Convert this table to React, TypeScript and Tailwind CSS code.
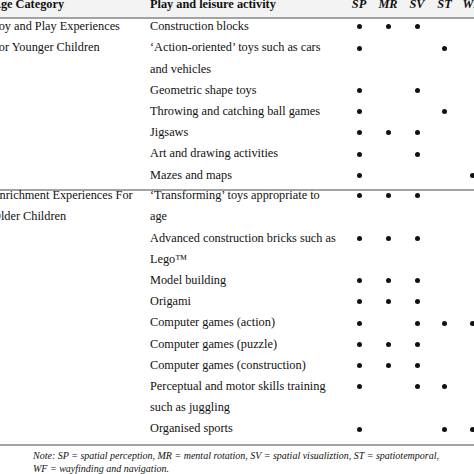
import React from "react"

type Code = "SP" | "MR" | "SV" | "ST" | "WF"

type Activity = {
  lines: string[]
  marks: Code[]
}

type Section = {
  category: string[]
  activities: Activity[]
}

const codes: Code[] = ["SP", "MR", "SV", "ST", "WF"]

const sections: Section[] = [
  {
    category: ["Toy and Play Experiences", "For Younger Children"],
    activities: [
      { lines: ["Construction blocks"], marks: ["SP", "MR", "SV"] },
      { lines: ["\u2018Action-oriented\u2019 toys such as cars", "and vehicles"], marks: ["SP", "ST"] },
      { lines: ["Geometric shape toys"], marks: ["SP", "SV"] },
      { lines: ["Throwing and catching ball games"], marks: ["SP", "ST"] },
      { lines: ["Jigsaws"], marks: ["SP", "MR", "SV"] },
      { lines: ["Art and drawing activities"], marks: ["SP", "SV"] },
      { lines: ["Mazes and maps"], marks: ["SP", "WF"] },
    ],
  },
  {
    category: ["Enrichment Experiences For", "Older Children"],
    activities: [
      { lines: ["\u2018Transforming\u2019 toys appropriate to", "age"], marks: ["SP", "MR", "SV"] },
      { lines: ["Advanced construction bricks such as", "Lego\u2122"], marks: ["SP", "MR", "SV"] },
      { lines: ["Model building"], marks: ["SP", "MR", "SV"] },
      { lines: ["Origami"], marks: ["SP", "MR", "SV"] },
      { lines: ["Computer games (action)"], marks: ["SP", "SV", "ST", "WF"] },
      { lines: ["Computer games (puzzle)"], marks: ["SP", "MR", "SV"] },
      { lines: ["Computer games (construction)"], marks: ["SP", "MR", "SV"] },
      { lines: ["Perceptual and motor skills training", "such as juggling"], marks: ["SP", "SV", "ST"] },
      { lines: ["Organised sports"], marks: ["SP", "ST", "WF"] },
    ],
  },
]

const rowGrid = "grid grid-cols-[195px_28px_30px_28px_27px_28px]"

function ActivityRow({ activity }: { activity: Activity }) {
  return (
    <div className={rowGrid}>
      <div>
        {activity.lines.map((line) => (
          <div key={line}>{line}</div>
        ))}
      </div>
      {codes.map((c) => (
        <div key={c} className="flex h-[21.2px] items-center justify-center">
          {activity.marks.includes(c) && (
            <span className="block h-[5px] w-[5px] rounded-full bg-[#111]" />
          )}
        </div>
      ))}
    </div>
  )
}

function SectionBlock({ section }: { section: Section }) {
  return (
    <div className="flex">
      <div className="w-[158px] shrink-0">
        {section.category.map((line) => (
          <div key={line}>{line}</div>
        ))}
      </div>
      <div>
        {section.activities.map((a) => (
          <ActivityRow key={a.lines[0]} activity={a} />
        ))}
      </div>
    </div>
  )
}

export default function App() {
  return (
    <div className="relative h-[474px] w-[474px] overflow-hidden bg-white font-['Liberation_Serif','Times_New_Roman',serif] text-[12.3px] leading-[21.2px] text-[#111]">
      <div className="-ml-[8px] -mt-[3px] w-[494px]">
        {/* header */}
        <div className="flex border-b-2 border-[#a3a3a3] bg-[#f3f3f3] pb-[6px] font-bold leading-[14px]">
          <div className="w-[158px] shrink-0">Age Category</div>
          <div className={rowGrid}>
            <div>Play and leisure activity</div>
            {codes.map((c) => (
              <div key={c} className="text-center italic">
                {c}
              </div>
            ))}
          </div>
        </div>

        <div className="-mt-[2.8px]">
          <SectionBlock section={sections[0]} />
        </div>

        <div className="mt-[2.7px] border-b-2 border-t-2 border-[#a3a3a3] pb-[4px]">
          <div className="-mt-[5.3px]">
            <SectionBlock section={sections[1]} />
          </div>
        </div>

        <p className="pl-[41px] pt-[3px] text-[10px] italic leading-[13px]">
          Note: SP = spatial perception, MR = mental rotation, SV = spatial visualiztion, ST = spatiotemporal,
          <br />
          WF = wayfinding and navigation.
        </p>
      </div>
    </div>
  )
}
